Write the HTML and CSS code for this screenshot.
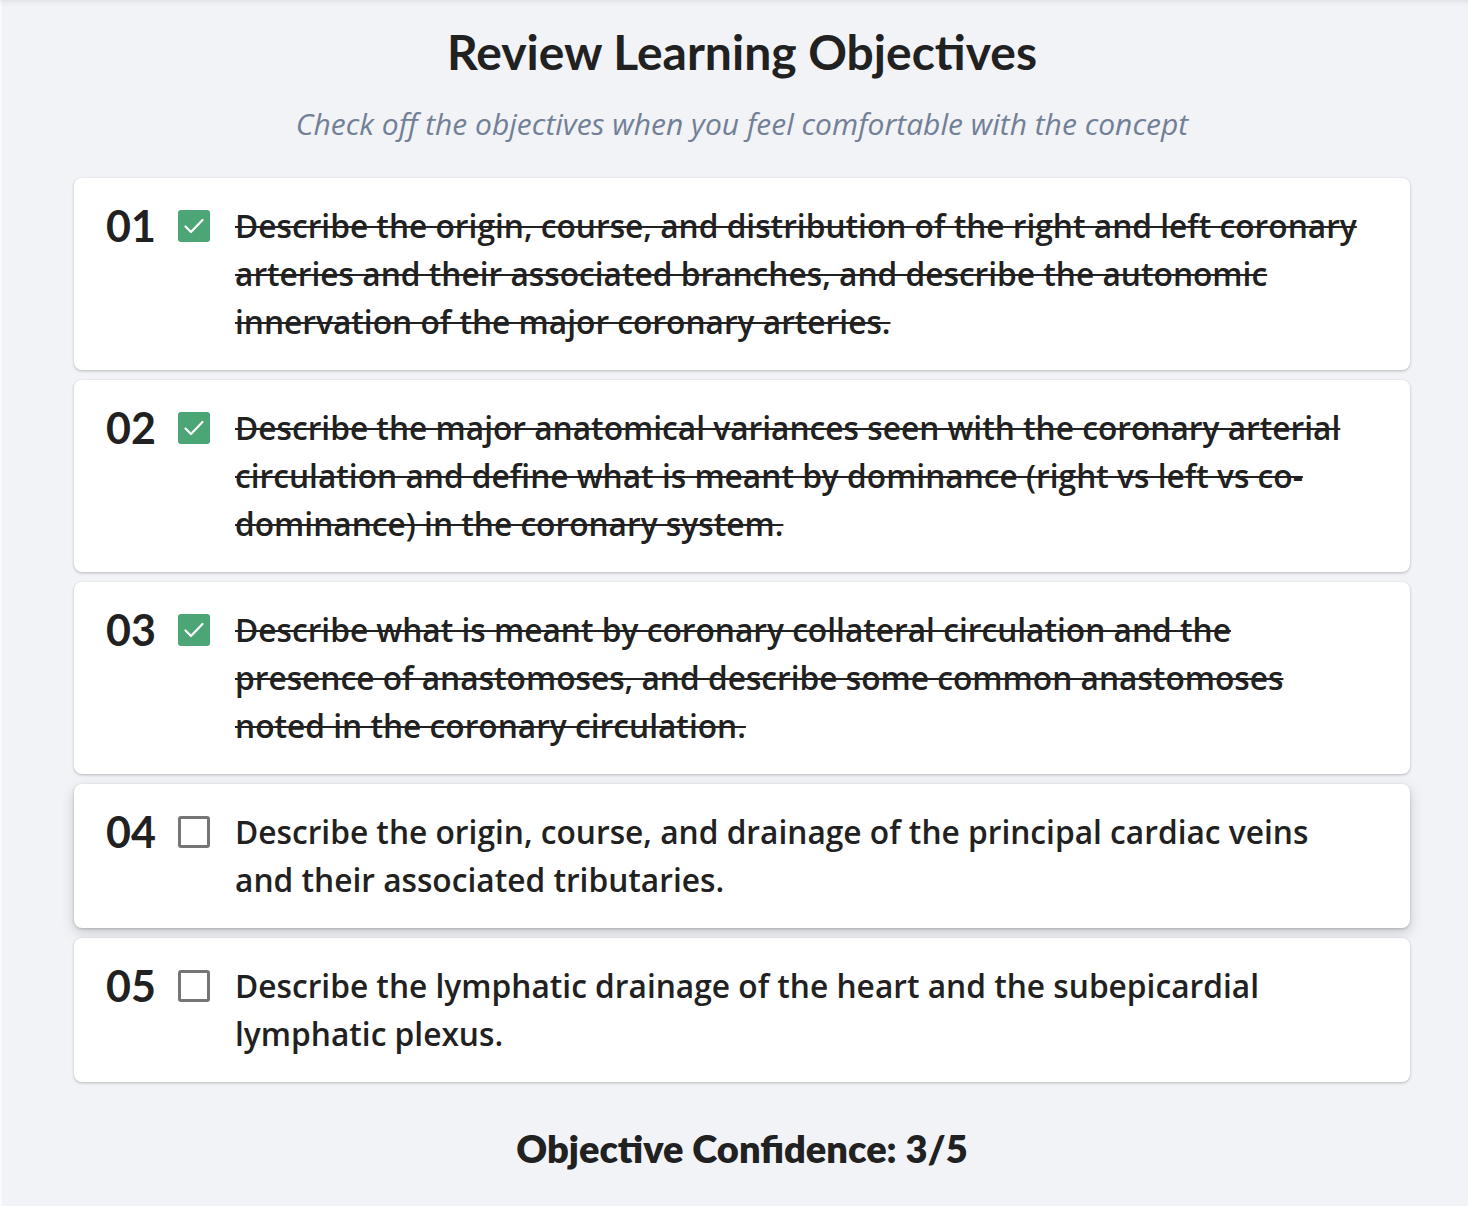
FILE: index.html
```html
<!DOCTYPE html>
<html lang="en">
<head>
<meta charset="utf-8">
<title>Review Learning Objectives</title>
<link rel="stylesheet" href="styles.css">
</head>
<body>
<main class="page">
  <h1 class="title">Review Learning Objectives</h1>
  <p class="subtitle">Check off the objectives when you feel comfortable with the concept</p>
  <ul class="list">
    <li class="card done">
      <span class="num">01</span>
      <span class="box checked"><svg viewBox="0 0 32 32"><path d="M7.5 16.5l5.5 5.5L24.5 10" fill="none" stroke="#fff" stroke-width="2.2" stroke-linecap="round" stroke-linejoin="round"/></svg></span>
      <p class="text">Describe the origin, course, and distribution of the right and left coronary arteries and their associated branches, and describe the autonomic innervation of the major coronary arteries.</p>
    </li>
    <li class="card done">
      <span class="num">02</span>
      <span class="box checked"><svg viewBox="0 0 32 32"><path d="M7.5 16.5l5.5 5.5L24.5 10" fill="none" stroke="#fff" stroke-width="2.2" stroke-linecap="round" stroke-linejoin="round"/></svg></span>
      <p class="text">Describe the major anatomical variances seen with the coronary arterial circulation and define what is meant by dominance (right vs left vs co-dominance) in the coronary system.</p>
    </li>
    <li class="card done">
      <span class="num">03</span>
      <span class="box checked"><svg viewBox="0 0 32 32"><path d="M7.5 16.5l5.5 5.5L24.5 10" fill="none" stroke="#fff" stroke-width="2.2" stroke-linecap="round" stroke-linejoin="round"/></svg></span>
      <p class="text">Describe what is meant by coronary collateral circulation and the presence of anastomoses, and describe some common anastomoses noted in the coronary circulation.</p>
    </li>
    <li class="card hover">
      <span class="num">04</span>
      <span class="box"></span>
      <p class="text">Describe the origin, course, and drainage of the principal cardiac veins and their associated tributaries.</p>
    </li>
    <li class="card">
      <span class="num">05</span>
      <span class="box"></span>
      <p class="text">Describe the lymphatic drainage of the heart and the subepicardial lymphatic plexus.</p>
    </li>
  </ul>
  <p class="score">Objective Confidence: 3/5</p>
</main>
</body>
</html>
```
FILE: styles.css
```css
html, body {
  margin: 0;
  padding: 0;
}
body {
  background: #f1f3f7;
  font-family: "Lato", "Noto Sans", sans-serif;
  color: #212121;
  min-height: 1206px;
  box-shadow: inset 0 7px 6px -6px rgba(0,0,0,0.10), inset 2px 0 0 #fafbfc;
}
.page {
  padding: 24px 58px 30px 74px;
}
.title {
  margin: 0;
  text-align: center;
  font-size: 48px;
  line-height: 56px;
  font-weight: 700;
  color: #212121;
}
.subtitle {
  margin: 24px 0 0;
  text-align: center;
  font-family: "Open Sans", "Lato", sans-serif;
  font-style: italic;
  font-size: 30px;
  line-height: 40px;
  color: #718096;
}
.list {
  list-style: none;
  margin: 34px 0 0;
  padding: 0;
  display: flex;
  flex-direction: column;
  gap: 10px;
}
.card {
  background: #fff;
  border-radius: 8px;
  box-shadow: 0 1px 3px rgba(0,0,0,0.25);
  padding: 24px 40px 24px 32px;
  display: flex;
  align-items: flex-start;
  gap: 24px;
}
.card.hover {
  box-shadow: 0 5px 14px rgba(0,0,0,0.16), 0 1px 3px rgba(0,0,0,0.2);
}
.num {
  flex: 0 0 48px;
  width: 48px;
  min-width: 0;
  font-size: 43px;
  line-height: 48px;
  font-weight: 700;
  color: #212121;
}
.box {
  flex: 0 0 32px;
  width: 32px;
  height: 32px;
  margin-top: 8px;
  box-sizing: border-box;
  border: 3px solid #757575;
  border-radius: 3px;
}
.box.checked {
  background: #4ba574;
  border: none;
}
.box svg {
  display: block;
  width: 32px;
  height: 32px;
}
.text {
  margin: 0 0 0 1px;
  font-family: "Open Sans", "Lato", sans-serif;
  font-size: 31.7px;
  line-height: 48px;
  font-weight: 600;
  color: #212121;
}
.done .text {
  text-decoration: line-through;
  text-decoration-thickness: 2px;
}
.score {
  margin: 44px 0 0;
  text-align: center;
  font-size: 38px;
  line-height: 44px;
  font-weight: 800;
  color: #212121;
}
```
